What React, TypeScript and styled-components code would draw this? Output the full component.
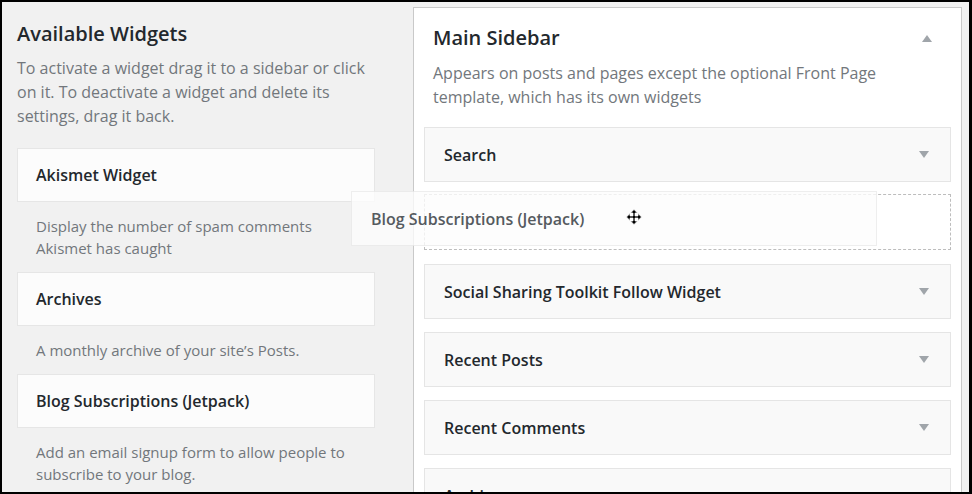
import React from "react";
import styled, { createGlobalStyle } from "styled-components";

const Global = createGlobalStyle`
  html, body { margin: 0; padding: 0; background: #000; }
  body { font-family: "Open Sans", "Noto Sans", sans-serif; -webkit-font-smoothing: antialiased; }
  * { box-sizing: border-box; }
`;

const Frame = styled.div`
  position: relative;
  width: 972px;
  height: 494px;
  border: 2px solid #000;
  border-right-width: 3px;
  background: #f1f1f1;
  overflow: hidden;
  display: flex;
  align-items: flex-start;
  gap: 38px;
  padding: 0 7px 0 15px;
`;

const LeftColumn = styled.section`
  width: 358px;
  flex-shrink: 0;
  margin-top: 18px;
`;

const Heading = styled.h2`
  margin: 0;
  font-size: 20px;
  line-height: 28px;
  font-weight: 600;
  color: #23282d;
`;

const Intro = styled.p`
  margin: 8px 0 20px;
  font-size: 16px;
  line-height: 24px;
  color: #72777c;
`;

const WidgetList = styled.div`
  display: flex;
  flex-direction: column;
`;

const WidgetCard = styled.div`
  height: 54px;
  background: #fcfcfc;
  border: 1px solid #e6e6e6;
  display: flex;
  align-items: center;
  padding: 0 18px;
  font-size: 16px;
  font-weight: 600;
  color: #23282d;
`;

const WidgetDesc = styled.p`
  margin: 0;
  padding: 13px 19px 13px;
  font-size: 15px;
  line-height: 22px;
  color: #72777c;
`;

const SidebarBox = styled.section`
  width: 549px;
  flex-shrink: 0;
  margin-top: 5px;
  background: #fff;
  border: 1px solid #c9c9c9;
  padding: 16px 10px 0;
`;

const SidebarHeader = styled.div`
  display: flex;
  justify-content: space-between;
  align-items: center;
  padding: 0 19px 0 9px;
`;

const SidebarTitle = styled.h2`
  margin: 0;
  font-size: 20px;
  line-height: 28px;
  font-weight: 600;
  color: #23282d;
`;

const SidebarDesc = styled.p`
  margin: 9px 0 18px;
  padding: 0 9px;
  font-size: 16px;
  line-height: 24px;
  color: #72777c;
`;

const Rows = styled.div`
  display: flex;
  flex-direction: column;
  gap: 13px;
`;

const Row = styled.div`
  height: 55px;
  flex-shrink: 0;
  border: 1px solid #e5e5e5;
  background: #f9f9f9;
  display: flex;
  align-items: center;
  justify-content: space-between;
  padding: 0 21px 0 19px;
  font-size: 16px;
  font-weight: 600;
  color: #23282d;
`;

const Placeholder = styled.div`
  height: 56px;
  flex-shrink: 0;
  margin: -1px 0 1px;
  border: 1px dashed #bdbdbd;
`;

const DragHelper = styled.div`
  position: absolute;
  left: 349px;
  top: 189px;
  width: 526px;
  height: 55px;
  background: rgba(252, 252, 252, 0.78);
  border: 1px solid rgba(0, 0, 0, 0.06);
  display: flex;
  align-items: center;
  padding: 0 19px;
  font-size: 16px;
  font-weight: 600;
  color: #555a5f;
`;

const Cursor = styled.svg`
  position: absolute;
  left: 274px;
  top: 17px;
`;

const Arrow = ({ up }: { up?: boolean }) => (
  <svg width="10" height="7" viewBox="0 0 10 7">
    <polygon points={up ? "0,7 10,7 5,0" : "0,0 10,0 5,7"} fill="#a0a5aa" />
  </svg>
);

const availableWidgets = [
  { title: "Akismet Widget", desc: "Display the number of spam comments Akismet has caught" },
  { title: "Archives", desc: "A monthly archive of your site’s Posts." },
  { title: "Blog Subscriptions (Jetpack)", desc: "Add an email signup form to allow people to subscribe to your blog." },
];

export default function App() {
  return (
    <>
      <Global />
      <Frame>
        <LeftColumn>
          <Heading>Available Widgets</Heading>
          <Intro>
            To activate a widget drag it to a sidebar or click on it. To deactivate a widget and delete its settings, drag it back.
          </Intro>
          <WidgetList>
            {availableWidgets.map((w) => (
              <React.Fragment key={w.title}>
                <WidgetCard>{w.title}</WidgetCard>
                <WidgetDesc>{w.desc}</WidgetDesc>
              </React.Fragment>
            ))}
          </WidgetList>
        </LeftColumn>
        <SidebarBox>
          <SidebarHeader>
            <SidebarTitle>Main Sidebar</SidebarTitle>
            <Arrow up />
          </SidebarHeader>
          <SidebarDesc>
            Appears on posts and pages except the optional Front Page template, which has its own widgets
          </SidebarDesc>
          <Rows>
            <Row>Search<Arrow /></Row>
            <Placeholder />
            <Row>Social Sharing Toolkit Follow Widget<Arrow /></Row>
            <Row>Recent Posts<Arrow /></Row>
            <Row>Recent Comments<Arrow /></Row>
            <Row>Archives<Arrow /></Row>
          </Rows>
        </SidebarBox>
        <DragHelper>
          Blog Subscriptions (Jetpack)
          <Cursor width="16" height="16" viewBox="0 0 16 16">
            <path
              d="M8 0.5 L11.5 4 H9 V7 H12 V4.5 L15.5 8 L12 11.5 V9 H9 V12 H11.5 L8 15.5 L4.5 12 H7 V9 H4 V11.5 L0.5 8 L4 4.5 V7 H7 V4 H4.5 Z"
              fill="#000"
              stroke="#fff"
              strokeWidth="0.7"
              strokeLinejoin="round"
            />
          </Cursor>
        </DragHelper>
      </Frame>
    </>
  );
}
